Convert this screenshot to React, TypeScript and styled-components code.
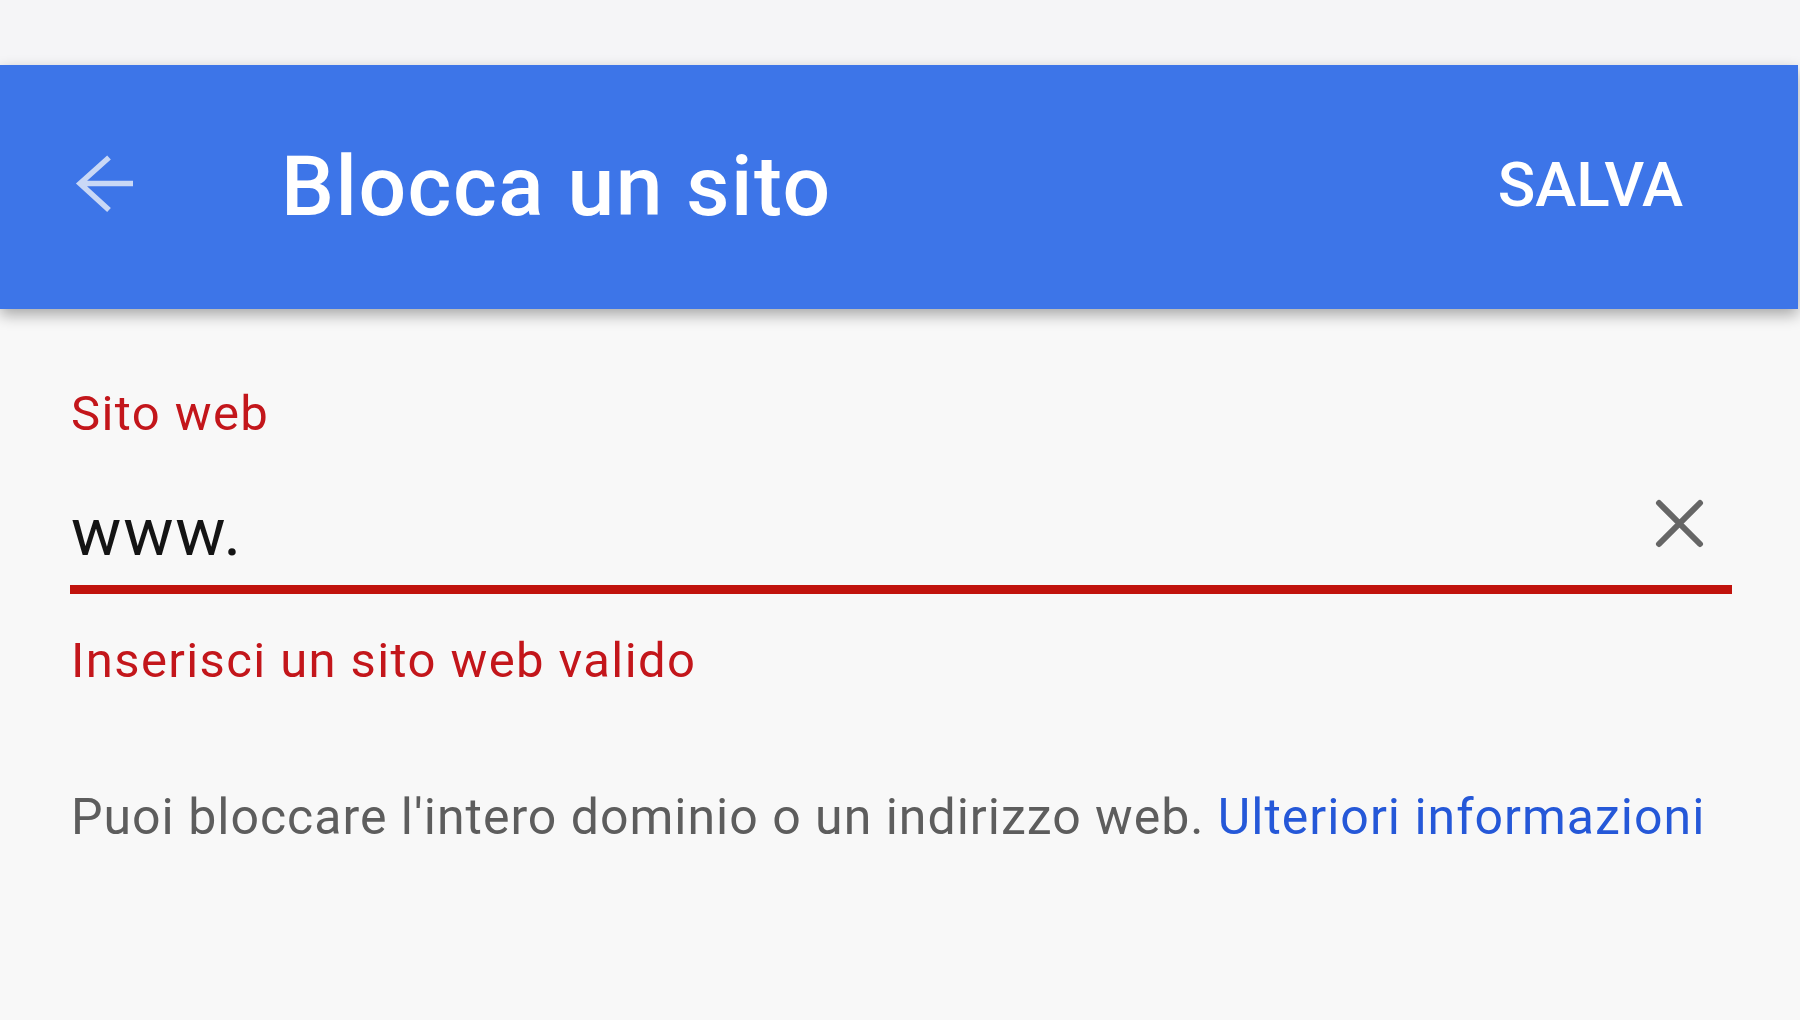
import React from "react";
import styled, { createGlobalStyle } from "styled-components";

const Global = createGlobalStyle`
  html, body {
    margin: 0;
    padding: 0;
    background: #f8f8f8;
  }
  body {
    font-family: Roboto, "Noto Sans", "Liberation Sans", sans-serif;
    overflow: hidden;
  }
`;

const Page = styled.div`
  width: 1800px;
  height: 1020px;
  display: flex;
  flex-direction: column;
  background: #f8f8f8;
  overflow: hidden;
`;

const StatusStrip = styled.div`
  height: 65px;
  flex: none;
  background: #f5f5f7;
`;

const AppBar = styled.header`
  height: 244px;
  flex: none;
  margin-right: 2px;
  display: flex;
  align-items: center;
  padding: 0 115px 0 75px;
  background: #3d75e8;
  box-shadow: 0 6px 14px rgba(0, 0, 0, 0.32);
  position: relative;
  z-index: 1;
`;

const BackButton = styled.button`
  border: none;
  background: none;
  padding: 0;
  margin: -6px 0 0 0;
  width: 60px;
  height: 58px;
  display: flex;
  cursor: pointer;
`;

const Title = styled.h1`
  margin: 0 0 0 146px;
  flex: 1;
  font-size: 84px;
  font-weight: 500;
  color: #ffffff;
  line-height: 1;
  letter-spacing: 1.5px;
`;

const Action = styled.button`
  border: none;
  background: none;
  padding: 0;
  margin: -4px 0 0 0;
  font-family: Roboto, "Noto Sans", sans-serif;
  font-size: 62px;
  font-weight: 500;
  color: #ffffff;
  line-height: 1;
  cursor: pointer;
`;

const Content = styled.main`
  display: flex;
  flex-direction: column;
  padding: 0 68px 0 70px;
`;

const FieldLabel = styled.label`
  margin-top: 76px;
  padding-left: 1px;
  font-size: 49px;
  line-height: 1.171;
  letter-spacing: 1.4px;
  color: #c3161b;
`;

const InputRow = styled.div`
  margin-top: 51px;
  display: flex;
  align-items: flex-start;
  padding-bottom: 13px;
  border-bottom: 9px solid #c1130d;
`;

const InputText = styled.div`
  flex: 1;
  padding-left: 1px;
  font-size: 67px;
  line-height: 1.171;
  letter-spacing: 1.8px;
  color: #141414;
`;

const ClearButton = styled.button`
  border: none;
  background: none;
  padding: 0;
  margin: 6px 28px 0 0;
  width: 49px;
  height: 49px;
  display: flex;
  cursor: pointer;
`;

const ErrorText = styled.div`
  margin-top: 38px;
  padding-left: 1px;
  font-size: 49px;
  line-height: 1.171;
  letter-spacing: 1.4px;
  color: #c3161b;
`;

const HelpText = styled.p`
  margin: 99px 0 0 0;
  padding-left: 1px;
  font-size: 50px;
  line-height: 1.171;
  letter-spacing: 1px;
  color: #5d5d5d;
  white-space: nowrap;
`;

const Link = styled.a`
  color: #2558d8;
  text-decoration: none;
`;

export default function App() {
  return (
    <Page>
      <Global />
      <StatusStrip />
      <AppBar>
        <BackButton aria-label="Indietro">
          <svg width="60" height="58" viewBox="0 0 60 58">
            <path
              d="M58 28.5H5M34 2.5L5 28.5L34 55"
              fill="none"
              stroke="#c9d8f6"
              strokeWidth="5.5"
              strokeLinejoin="miter"
            />
          </svg>
        </BackButton>
        <Title>Blocca un sito</Title>
        <Action>SALVA</Action>
      </AppBar>
      <Content>
        <FieldLabel>Sito web</FieldLabel>
        <InputRow>
          <InputText>www.</InputText>
          <ClearButton aria-label="Cancella">
            <svg width="49" height="49" viewBox="0 0 49 49">
              <path
                d="M4 4L45 45M45 4L4 45"
                fill="none"
                stroke="#666666"
                strokeWidth="6"
                strokeLinecap="round"
              />
            </svg>
          </ClearButton>
        </InputRow>
        <ErrorText>Inserisci un sito web valido</ErrorText>
        <HelpText>
          Puoi bloccare l'intero dominio o un indirizzo web.{" "}
          <Link href="#">Ulteriori informazioni</Link>
        </HelpText>
      </Content>
    </Page>
  );
}
